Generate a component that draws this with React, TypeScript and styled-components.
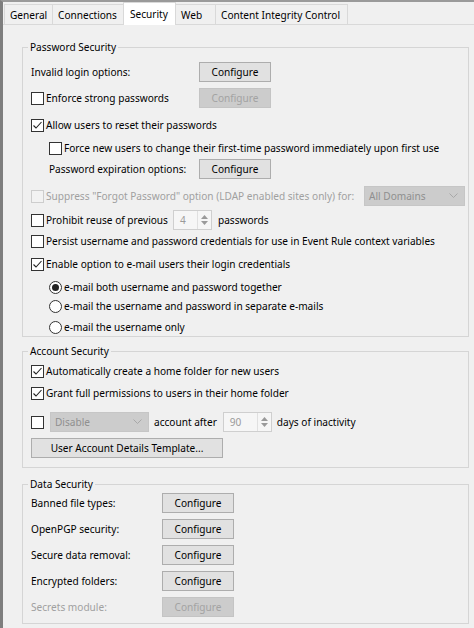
import React from 'react'
import styled, { createGlobalStyle } from 'styled-components'

const GlobalStyle = createGlobalStyle`
  html, body {
    margin: 0;
    padding: 0;
    background: #f0f0f0;
  }
  body {
    font-family: 'Noto Sans', 'Open Sans', sans-serif;
    font-size: 10.1px;
    color: #000;
  }
`

const Frame = styled.div`
  width: 474px;
  height: 628px;
  box-sizing: border-box;
  border-top: 2px solid #9a9a9a;
  border-left: 3px solid #7e7e7e;
  background: #e9e9e9;
  display: flex;
  flex-direction: column;
  overflow: hidden;
`

const TabBar = styled.div`
  display: flex;
  align-items: flex-end;
  height: 23px;
  box-sizing: border-box;
  padding-left: 1px;
  border-bottom: 1px solid #d9d9d9;
  background: #f0f0f0;
`

const Tab = styled.div<{ $w: number; $active?: boolean }>`
  width: ${p => p.$w}px;
  height: ${p => (p.$active ? 23 : 20)}px;
  margin-bottom: ${p => (p.$active ? -1 : 0)}px;
  margin-right: -1px;
  box-sizing: border-box;
  padding-left: ${p => (p.$active ? 6 : 5)}px;
  background: ${p => (p.$active ? '#ffffff' : '#f0f0f0')};
  border: 1px solid #d9d9d9;
  border-bottom: none;
  display: flex;
  align-items: center;
  position: relative;
  z-index: ${p => (p.$active ? 1 : 0)};
`

const Page = styled.div`
  flex: 1;
  background: #f0f0f0;
  padding: 15px 5px 0 19px;
  display: flex;
  flex-direction: column;
`

const Group = styled.fieldset<{ $mt?: number; $pb: number }>`
  margin: ${p => p.$mt ?? 0}px 0 0 0;
  padding: 0 3px ${p => p.$pb}px 8px;
  border: 1px solid #d5d5d5;
  min-width: 0;
  display: flex;
  flex-direction: column;
`

const Legend = styled.legend`
  padding: 0 2px;
  margin-left: -3px;
  line-height: 14px;
`

const Row = styled.div<{ $mt: number; $h?: number; $indent?: number }>`
  display: flex;
  align-items: center;
  height: ${p => p.$h ?? 20}px;
  margin-top: ${p => p.$mt}px;
  padding-left: ${p => p.$indent ?? 0}px;
  white-space: nowrap;
`

const Label = styled.span<{ $w?: number; $disabled?: boolean }>`
  width: ${p => (p.$w ? `${p.$w}px` : 'auto')};
  flex: none;
  color: ${p => (p.$disabled ? '#a0a0a0' : '#000')};
`

const Text = styled.span<{ $ml?: number; $disabled?: boolean }>`
  margin-left: ${p => p.$ml ?? 0}px;
  color: ${p => (p.$disabled ? '#9c9c9c' : '#000')};
`

const CheckWrap = styled.span<{ $w?: number }>`
  display: flex;
  align-items: center;
  width: ${p => (p.$w ? `${p.$w}px` : 'auto')};
  flex: none;
`

const Box = styled.span<{ $disabled?: boolean }>`
  width: 13px;
  height: 13px;
  box-sizing: border-box;
  flex: none;
  border: 1px solid ${p => (p.$disabled ? '#cdcdcd' : '#333333')};
  background: ${p => (p.$disabled ? '#f2f2f2' : '#ffffff')};
  display: flex;
  align-items: center;
  justify-content: center;
  margin-right: 2px;
`

const RadioCircle = styled.span`
  width: 13px;
  height: 13px;
  box-sizing: border-box;
  flex: none;
  border: 1px solid #333333;
  border-radius: 50%;
  background: #fff;
  display: flex;
  align-items: center;
  justify-content: center;
  margin-right: 2px;
`

const Dot = styled.span`
  width: 7px;
  height: 7px;
  border-radius: 50%;
  background: #222;
`

const Button = styled.button<{ $w?: number }>`
  width: ${p => p.$w ?? 72}px;
  height: 20px;
  flex: none;
  box-sizing: border-box;
  padding: 0;
  background: #e1e1e1;
  border: 1px solid #adadad;
  border-radius: 0;
  font: inherit;
  color: #000;
  &:disabled {
    background: #cccccc;
    border-color: #c4c4c4;
    color: #a3a3a3;
  }
`

const Select = styled.div<{ $w: number; $ml?: number }>`
  width: ${p => p.$w}px;
  height: 20px;
  margin-left: ${p => p.$ml ?? 0}px;
  flex: none;
  box-sizing: border-box;
  border: 1px solid #c6c6c6;
  background: #cccccc;
  color: #8f8f8f;
  display: flex;
  align-items: center;
  justify-content: space-between;
  padding: 0 6px 0 4px;
`

const Spin = styled.div<{ $w: number; $ml?: number }>`
  width: ${p => p.$w}px;
  height: 20px;
  margin-left: ${p => p.$ml ?? 0}px;
  flex: none;
  box-sizing: border-box;
  border: 1px solid #cfcfcf;
  background: #f6f6f6;
  color: #9a9a9a;
  display: flex;
  align-items: stretch;
`

const SpinValue = styled.span`
  flex: 1;
  display: flex;
  align-items: center;
  padding-left: 6px;
`

const SpinArrows = styled.span`
  width: 13px;
  border-left: 1px solid #e0e0e0;
  display: flex;
  flex-direction: column;
  align-items: center;
  justify-content: center;
  gap: 2px;
`

const Chevron = () => (
  <svg width="9" height="6" viewBox="0 0 9 6">
    <path d="M0.5 0.5 L4.5 4.5 L8.5 0.5" fill="none" stroke="#a8a8a8" strokeWidth="1" />
  </svg>
)

const Tick = () => (
  <svg width="11" height="11" viewBox="0 0 11 11">
    <path d="M1.5 5.5 L4 8 L9.5 2" fill="none" stroke="#222" strokeWidth="1.1" />
  </svg>
)

const Check = ({
  checked,
  disabled,
  w,
  children,
}: {
  checked?: boolean
  disabled?: boolean
  w?: number
  children?: React.ReactNode
}) => (
  <CheckWrap $w={w}>
    <Box $disabled={disabled}>{checked && <Tick />}</Box>
    {children && <Label $disabled={disabled}>{children}</Label>}
  </CheckWrap>
)

const Radio = ({ selected, children }: { selected?: boolean; children: React.ReactNode }) => (
  <CheckWrap>
    <RadioCircle>{selected && <Dot />}</RadioCircle>
    <Label>{children}</Label>
  </CheckWrap>
)

const Spinner = ({ value, w, ml }: { value: string; w: number; ml?: number }) => (
  <Spin $w={w} $ml={ml}>
    <SpinValue>{value}</SpinValue>
    <SpinArrows>
      <svg width="7" height="4" viewBox="0 0 7 4">
        <path d="M0 4 L3.5 0 L7 4 Z" fill="#9a9a9a" />
      </svg>
      <svg width="7" height="4" viewBox="0 0 7 4">
        <path d="M0 0 L3.5 4 L7 0 Z" fill="#9a9a9a" />
      </svg>
    </SpinArrows>
  </Spin>
)

const tabs = [
  { label: 'General', w: 49 },
  { label: 'Connections', w: 72 },
  { label: 'Security', w: 53, active: true },
  { label: 'Web', w: 41 },
  { label: 'Content Integrity Control', w: 133 },
]

const dataRows = [
  { label: 'Banned file types:' },
  { label: 'OpenPGP security:' },
  { label: 'Secure data removal:' },
  { label: 'Encrypted folders:' },
  { label: 'Secrets module:', disabled: true },
]

export default function App() {
  return (
    <>
      <GlobalStyle />
      <Frame>
        <TabBar>
          {tabs.map(t => (
            <Tab key={t.label} $w={t.w} $active={t.active}>
              {t.label}
            </Tab>
          ))}
        </TabBar>
        <Page>
          <Group $pb={1}>
            <Legend>Password Security</Legend>
            <Row $mt={8}>
              <Label $w={168}>Invalid login options:</Label>
              <Button>Configure</Button>
            </Row>
            <Row $mt={6}>
              <Check w={168}>Enforce strong passwords</Check>
              <Button disabled>Configure</Button>
            </Row>
            <Row $mt={7}>
              <Check checked>Allow users to reset their passwords</Check>
            </Row>
            <Row $mt={3} $indent={18}>
              <Check>Force new users to change their first-time password immediately upon first use</Check>
            </Row>
            <Row $mt={1} $indent={18}>
              <Label $w={150}>Password expiration options:</Label>
              <Button>Configure</Button>
            </Row>
            <Row $mt={7}>
              <Check disabled>Suppress "Forgot Password" option (LDAP enabled sites only) for:</Check>
              <Select $w={101} style={{ marginLeft: 'auto' }}>
                All Domains
                <Chevron />
              </Select>
            </Row>
            <Row $mt={4}>
              <Check>Prohibit reuse of previous</Check>
              <Spinner value="4" w={39} ml={5} />
              <Text $ml={6}>passwords</Text>
            </Row>
            <Row $mt={1}>
              <Check>Persist username and password credentials for use in Event Rule context variables</Check>
            </Row>
            <Row $mt={3}>
              <Check checked>Enable option to e-mail users their login credentials</Check>
            </Row>
            <Row $mt={4} $h={18} $indent={18}>
              <Radio selected>e-mail both username and password together</Radio>
            </Row>
            <Row $mt={1} $h={18} $indent={18}>
              <Radio>e-mail the username and password in separate e-mails</Radio>
            </Row>
            <Row $mt={4} $h={16} $indent={18}>
              <Radio>e-mail the username only</Radio>
            </Row>
          </Group>

          <Group $mt={7} $pb={9}>
            <Legend>Account Security</Legend>
            <Row $mt={3}>
              <Check checked>Automatically create a home folder for new users</Check>
            </Row>
            <Row $mt={2}>
              <Check checked>Grant full permissions to users in their home folder</Check>
            </Row>
            <Row $mt={9}>
              <Check />
              <Select $w={99} $ml={4}>
                Disable
                <Chevron />
              </Select>
              <Text $ml={5}>account after</Text>
              <Spinner value="90" w={49} ml={6} />
              <Text $ml={5}>days of inactivity</Text>
            </Row>
            <Row $mt={6}>
              <Button $w={192}>User Account Details Template...</Button>
            </Row>
          </Group>

          <Group $mt={9} $pb={6}>
            <Legend>Data Security</Legend>
            {dataRows.map((r, i) => (
              <Row key={r.label} $mt={i === 0 ? 2 : 6}>
                <Label $w={131} $disabled={r.disabled}>
                  {r.label}
                </Label>
                <Button disabled={r.disabled}>Configure</Button>
              </Row>
            ))}
          </Group>
        </Page>
      </Frame>
    </>
  )
}
